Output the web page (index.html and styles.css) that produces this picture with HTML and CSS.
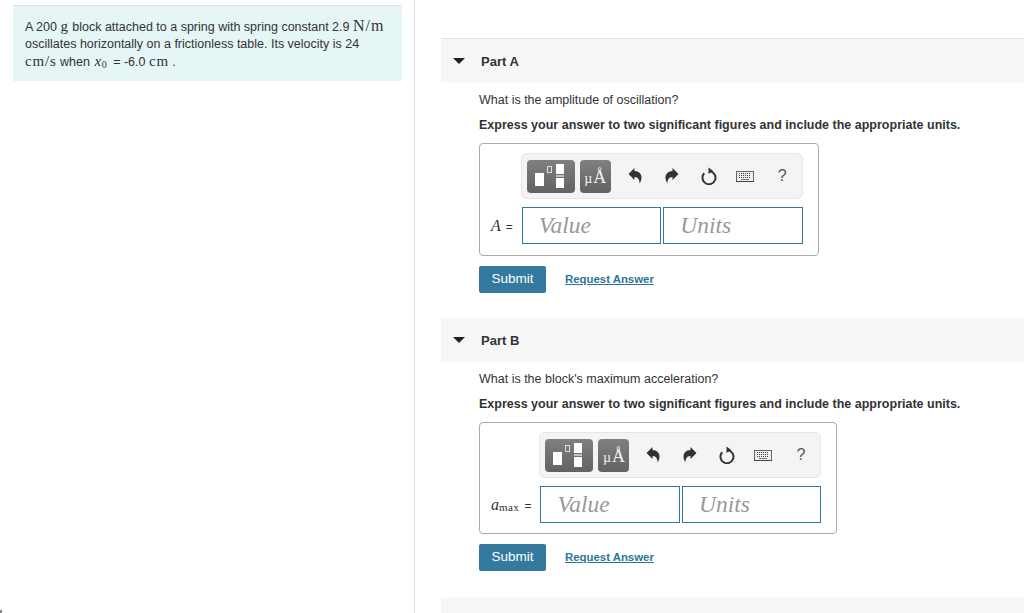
FILE: index.html
```html
<!DOCTYPE html>
<html>
<head>
  <title>Simple Harmonic Motion</title>
  <link rel="stylesheet" href="styles.css">
</head>
<body>
  <svg class="defs" width="0" height="0">
    <symbol id="undo" viewBox="0 0 14 16"><path d="M.5 6 6.500 0v3C11 3 13.500 6 13.500 9.500c0 2.500-1 4.500-2 6 .3-3-1-6.500-5-6.500v3z"/></symbol>
    <symbol id="redo" viewBox="0 0 14 16"><path d="M13.500 6 7.500 0v3C3 3 .5 6 .5 9.500c0 2.500 1 4.500 2 6-.3-3 1-6.500 5-6.500v3z"/></symbol>
    <symbol id="reset" viewBox="0 0 18 18"><path d="M10 4.300A6.500 6.500 0 1 1 4.200 6.300" fill="none" stroke="#333" stroke-width="2"/><path d="M8.500 .5 13 3.700 8.500 7z"/></symbol>
    <symbol id="keyboard" viewBox="0 0 18 11"><rect x=".5" y=".5" width="17" height="10" fill="#eee" stroke="#666"/><path d="M0 10.500h18" stroke="#444"/><path d="M3 2.500h12M3 4.500h12M3 6.500h12" stroke="#444" stroke-dasharray="1 1"/><path d="M5 8.500h8" stroke="#777"/></symbol>
    <symbol id="templates" viewBox="0 0 48 33"><rect x="8" y="13" width="9" height="13" fill="#fff"/><rect x="20.500" y="6.500" width="4" height="6" fill="none" stroke="#ddd"/><rect x="29" y="4" width="8" height="10" fill="#fff"/><rect x="29" y="15" width="8" height="2" fill="#c4c4c4"/><rect x="29" y="18" width="8" height="10" fill="#fff"/></symbol>
  </svg>

  <div class="page">
    <!-- Problem statement -->
    <div class="left-col">
      <div class="statement">
        A 200 <span class="math">g</span> block attached to a spring with spring constant 2.9 <span class="math unit-big">N/m</span>
        oscillates horizontally on a frictionless table. Its velocity is 24
        <span class="math">cm/s</span> when <span class="math var-x"><i>x</i><sub>0</sub></span> = -6.0 <span class="math">cm</span> .
      </div>
    </div>

    <!-- Parts -->
    <div class="right-col">
      <div class="part">
        <div class="part-header"><span class="arrow"></span><span class="part-title">Part A</span></div>
        <div class="part-body">
          <p class="question">What is the amplitude of oscillation?</p>
          <p class="hint">Express your answer to two significant figures and include the appropriate units.</p>
          <div class="answer-box">
            <div></div>
            <div class="toolbar">
              <span class="tool-btn btn-wide"><svg width="48" height="33"><use href="#templates"/></svg></span>
              <span class="tool-btn btn-unit"><span class="mu">µ</span>Å</span>
              <svg class="icon icon-undo"><use href="#undo"/></svg>
              <svg class="icon icon-redo"><use href="#redo"/></svg>
              <svg class="icon icon-reset"><use href="#reset"/></svg>
              <svg class="icon icon-keys"><use href="#keyboard"/></svg>
              <span class="help">?</span>
            </div>
            <div class="var-label"><i>A</i><span class="eq">=</span></div>
            <div class="inputs">
              <input class="field" type="text" placeholder="Value">
              <input class="field" type="text" placeholder="Units">
            </div>
          </div>
          <div class="actions">
            <button class="submit">Submit</button>
            <a class="request" href="#">Request Answer</a>
          </div>
        </div>
      </div>

      <div class="part">
        <div class="part-header"><span class="arrow"></span><span class="part-title">Part B</span></div>
        <div class="part-body">
          <p class="question">What is the block's maximum acceleration?</p>
          <p class="hint">Express your answer to two significant figures and include the appropriate units.</p>
          <div class="answer-box">
            <div></div>
            <div class="toolbar">
              <span class="tool-btn btn-wide"><svg width="48" height="33"><use href="#templates"/></svg></span>
              <span class="tool-btn btn-unit"><span class="mu">µ</span>Å</span>
              <svg class="icon icon-undo"><use href="#undo"/></svg>
              <svg class="icon icon-redo"><use href="#redo"/></svg>
              <svg class="icon icon-reset"><use href="#reset"/></svg>
              <svg class="icon icon-keys"><use href="#keyboard"/></svg>
              <span class="help">?</span>
            </div>
            <div class="var-label"><i>a</i><span class="sub">max</span><span class="eq">=</span></div>
            <div class="inputs">
              <input class="field" type="text" placeholder="Value">
              <input class="field" type="text" placeholder="Units">
            </div>
          </div>
          <div class="actions">
            <button class="submit">Submit</button>
            <a class="request" href="#">Request Answer</a>
          </div>
        </div>
      </div>

      <div class="part">
        <div class="part-header"><span class="arrow"></span><span class="part-title">Part C</span></div>
      </div>
    </div>
  </div>

  <div class="corner"></div>
</body>
</html>
```

FILE: styles.css
```css
html,
body {
  height: 100%;
  overflow: hidden;
}

body {
  font-family: "Liberation Sans", Arial, sans-serif;
  font-size: 12.5px;
  color: #333;
  background-color: #fff;
  margin: 0;
}

.defs {
  position: absolute;
}

.corner {
  position: absolute;
  left: 0;
  bottom: 0;
  width: 2px;
  height: 3px;
  background-color: #888;
}

.page {
  display: flex;
  height: 613px;
}

.left-col {
  width: 415px;
  flex: none;
  box-sizing: border-box;
  padding: 5px 12px 0 13px;
  border-right: 1px solid #d8dde3;
}

.statement {
  height: 76px;
  box-sizing: border-box;
  padding: 11px 12px 0;
  background-color: #e6f6f6;
  border-top: 1px solid #dfe3e6;
  line-height: 17px;
}

.math {
  font-family: "Liberation Serif", serif;
  font-size: 15px;
  letter-spacing: 0.8px;
}

.unit-big {
  font-size: 16px;
  letter-spacing: 1px;
}

.var-x {
  margin: 0 2px 0 1px;
}

.math sub {
  font-size: 10px;
  line-height: 0;
  vertical-align: -2px;
}

.right-col {
  flex: 1;
  padding: 38px 0 0 26px;
}

.part-header {
  display: flex;
  align-items: center;
  height: 44px;
  background-color: #f7f7f7;
}

.part:first-child .part-header {
  border-top: 1px solid #e2e2e2;
}

.arrow {
  width: 0;
  height: 0;
  margin-left: 12px;
  border-left: 6px solid transparent;
  border-right: 6px solid transparent;
  border-top: 6px solid #222;
}

.part-title {
  margin-left: 16px;
  font-size: 13px;
  font-weight: bold;
  color: #333;
}

.part-body {
  padding: 10px 0 25px 38px;
}

.question {
  margin: 0 0 9px;
  line-height: 15px;
}

.hint {
  margin: 0 0 10px;
  line-height: 16px;
  font-weight: bold;
}

.answer-box {
  display: inline-grid;
  grid-template-columns: auto 282px;
  row-gap: 8px;
  vertical-align: top;
  padding: 9px 15px 11px 11px;
  border: 1px solid #aaa;
  border-radius: 4px;
}

/* second box sits a pixel shorter */
.part:nth-child(2) .answer-box {
  padding-bottom: 10px;
}

.part:nth-child(2) .part-body {
  padding-bottom: 26px;
}

.toolbar {
  display: flex;
  align-items: center;
  height: 46px;
  box-sizing: border-box;
  padding-left: 5px;
  background-color: #f4f4f4;
  border: 1px solid #e6e6e6;
  border-radius: 6px;
}

.tool-btn {
  display: flex;
  align-items: center;
  justify-content: center;
  height: 33px;
  border-radius: 4px;
  background: linear-gradient(#808080, #626262);
  color: #f2f2f2;
}

.btn-wide {
  width: 48px;
}

.btn-unit {
  width: 31px;
  margin-left: 5px;
  padding-top: 2px;
  box-sizing: border-box;
  font-family: "Liberation Serif", serif;
  font-size: 18px;
}

.mu {
  font-size: 14px;
  margin-top: 3px;
  margin-right: 1px;
}

.icon {
  fill: #333;
}

.icon-undo {
  width: 14px;
  height: 16px;
  margin-left: 17px;
}

.icon-redo {
  width: 14px;
  height: 16px;
  margin-left: 23px;
}

.icon-reset {
  width: 18px;
  height: 18px;
  margin-left: 21px;
}

.icon-keys {
  width: 18px;
  height: 11px;
  margin-left: 18px;
}

.help {
  margin-left: 24px;
  font-size: 16px;
  color: #555;
}

.var-label {
  align-self: center;
  padding-right: 8px;
  font-family: "Liberation Serif", serif;
  font-size: 16px;
  white-space: nowrap;
}

.var-label .eq {
  margin-left: 5px;
  font-family: "Liberation Sans", sans-serif;
  font-size: 12px;
}

.var-label .sub {
  font-size: 11px;
  position: relative;
  top: 1px;
  letter-spacing: 0.5px;
}

.inputs {
  display: flex;
  gap: 2px;
  padding-left: 1px;
}

.field {
  flex: 1;
  width: 0;
  height: 37px;
  box-sizing: border-box;
  padding: 0 16px;
  border: 1px solid #2f7a9e;
  font-family: "Liberation Serif", serif;
  font-style: italic;
  font-size: 23.5px;
  background-color: #fff;
}

.field::placeholder {
  color: #999;
  opacity: 1;
}

.actions {
  display: flex;
  align-items: center;
  margin-top: 10px;
}

.submit {
  width: 67px;
  height: 27px;
  padding: 0 0 2px;
  border: none;
  border-radius: 2px;
  background-color: #337a9e;
  color: #fff;
  font-family: "Liberation Sans", Arial, sans-serif;
  font-size: 13.5px;
}

.request {
  margin-left: 19px;
  margin-top: -1px;
  font-size: 11.4px;
  font-weight: bold;
  color: #2d7598;
}
```
